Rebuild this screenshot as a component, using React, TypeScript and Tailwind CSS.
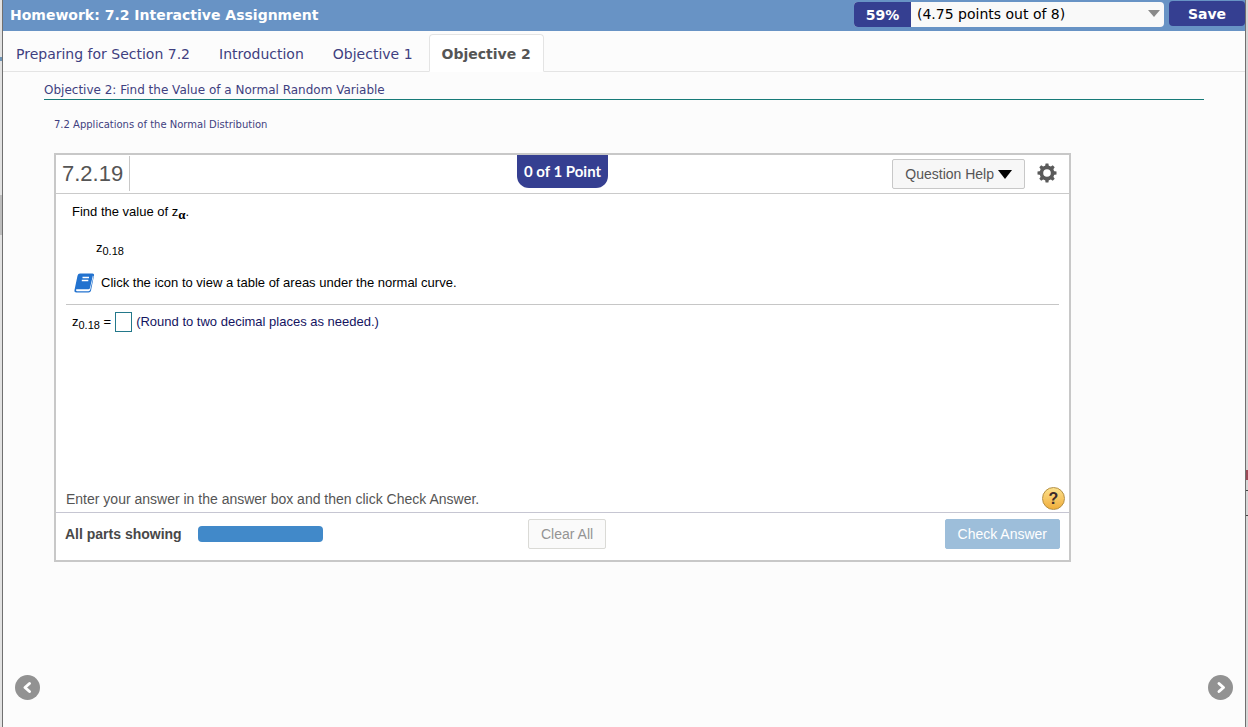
import { useState } from "react"

const tabs = [ "Preparing for Section 7.2", "Introduction", "Objective 1", "Objective 2" ]

const App = () => {

    const [ active, setActive ] = useState<string>("Objective 2")

    return (
        <div className="flex min-h-screen bg-[#fcfcfc] font-['DejaVu_Sans',sans-serif]">
            <div className="flex w-[3px] shrink-0 flex-col border-r border-[#707070] bg-[#e2e2e2]">
                <div className="mt-[57px] h-1 bg-[#6d93b5]"></div>
                <div className="mt-[134px] h-10 bg-[#bdbdbd]"></div>
            </div>
            <div className="flex min-w-0 grow flex-col">
                <Header />
                <nav className="flex h-[41px] items-end border-b border-[#e4e4e4]">
                    {
                        tabs.map(t => {
                            return (
                                <button
                                    key={t}
                                    onClick={() => setActive(t)}
                                    className={`-mb-px h-[38px] cursor-pointer rounded-t border px-3 pt-px text-sm ${t === active ? "border-[#e4e4e4] border-b-white bg-white font-bold text-[#555555]" : "mr-[3px] border-transparent text-[#3f3f80]"}`}
                                >
                                    {t}
                                </button>
                            )
                        })
                    }
                </nav>
                <main className="px-[41px] pt-[10px]">
                    <h2 className="border-b border-[#177a78] text-xs leading-[17px] text-[#3f3f80]">Objective 2: Find the Value of a Normal Random Variable</h2>
                    <div className="pl-[10px]">
                        <h3 className="pt-4 text-[10px] leading-[18px] text-[#3f3f80]">7.2 Applications of the Normal Distribution</h3>
                        <Question />
                    </div>
                </main>
                <div className="mt-auto flex justify-between px-3 pt-6 pb-[27px]">
                    <PageButton label="Previous" path="M14.5 8.5 L10 12.5 L14.5 16.5" />
                    <PageButton label="Next" path="M11 8.5 L15.5 12.5 L11 16.5" />
                </div>
            </div>
            <div className="flex w-[3px] shrink-0 flex-col border-l border-[#707070] bg-[#d6d6d6]">
                <div className="mt-[470px] h-[10px] bg-[#9c4b58]"></div>
                <div className="mt-[10px] h-px bg-[#444444]"></div>
                <div className="mt-6 h-px bg-[#444444]"></div>
            </div>
        </div>
    )
}

const Header = () => {
    return (
        <header className="flex h-[31px] items-start justify-between bg-[#6893c5]">
            <h1 className="pl-[7px] text-sm leading-[30px] font-bold text-white">Homework: 7.2 Interactive Assignment</h1>
            <div className="flex gap-[5px] pt-px">
                <div className="mt-px flex h-[25px] w-[310px] overflow-hidden rounded bg-[#f9f9f9]">
                    <label htmlFor="score" className="w-[57px] bg-[#353f91] text-center text-sm leading-[26px] font-bold text-white">59%</label>
                    <div className="relative grow">
                        <select id="score" className="block h-6 w-full appearance-none pl-[6px] text-sm leading-6 text-black">
                            <option>(4.75 points out of 8)</option>
                        </select>
                        <svg className="pointer-events-none absolute top-2 right-1" width="12" height="7" viewBox="0 0 12 7" fill="#8a8a8a"><path d="M0 0 H12 L6 7 Z" /></svg>
                    </div>
                </div>
                <button className="h-[25px] w-[76px] cursor-pointer rounded bg-[#353f91] text-sm font-bold text-white">Save</button>
            </div>
        </header>
    )
}

const Question = () => {
    return (
        <section className="mt-[19px] w-full max-w-[1017px] border-2 border-[#c8c8c8] bg-white font-['Liberation_Sans',sans-serif]">
            <div className="grid h-[39px] grid-cols-[1fr_auto_1fr] items-start border-b border-[#cacaca]">
                <div className="flex h-9">
                    <span className="mt-px border-r border-[#c8c8c8] px-[6px] text-[22px] leading-[36px] text-[#555555]">7.2.19</span>
                </div>
                <div className="h-[33px] rounded-b-xl bg-[#353f91] px-[7px] font-['Lato',sans-serif] text-[15px] leading-[32px] font-bold text-white">0 of 1 Point</div>
                <div className="flex items-center justify-end gap-3 pt-1 pr-3">
                    <button className="flex h-[30px] cursor-pointer items-center gap-1 rounded-xs border border-[#c8c8c8] bg-[#f7f7f7] px-3 text-sm text-[#555555]">
                        Question Help
                        <svg width="14" height="9" viewBox="0 0 14 9" fill="#000000"><path d="M0 0 H14 L7 9 Z" /></svg>
                    </button>
                    <button aria-label="Settings" className="cursor-pointer pb-[2px]">
                        <GearIcon />
                    </button>
                </div>
            </div>
            <div className="flex min-h-[319px] flex-col border-b border-[#c6c6d2] text-[13px] text-black">
                <p className="pt-2 pl-4 leading-5">Find the value of z<Sub><b className="font-['Liberation_Serif',serif] text-[13px]">α</b></Sub>.</p>
                <p className="pt-4 pl-10 leading-5">z<Sub>0.18</Sub></p>
                <div className="flex items-center gap-[6px] pt-[15px] pl-[18px] leading-5">
                    <BookIcon />
                    <span>Click the icon to view a table of areas under the normal curve.</span>
                </div>
                <div className="mx-[10px] mt-[11px] border-t border-[#c6c6c6]"></div>
                <div className="flex items-center gap-1 pt-[7px] pl-4">
                    <label htmlFor="answer" className="leading-5">z<Sub>0.18</Sub> =</label>
                    <input id="answer" type="text" className="h-5 w-[17px] border border-[#23788a] bg-white text-center outline-none" />
                    <span className="text-[#14145f]">(Round to two decimal places as needed.)</span>
                </div>
                <div className="mt-auto flex items-center justify-between pr-1 pb-[2px] pl-[10px]">
                    <p className="text-sm text-[#555555]">Enter your answer in the answer box and then click Check Answer.</p>
                    <button aria-label="Help" className="size-[23px] cursor-pointer rounded-full border border-[#b58f42] bg-linear-to-b from-[#fbe08a] to-[#f0ae38] text-base leading-[21px] font-bold text-[#3a2a2a]">?</button>
                </div>
            </div>
            <div className="grid h-[47px] grid-cols-[463px_1fr_auto] items-start pt-[6px] pr-[9px] pl-[9px] text-sm">
                <div className="flex h-[30px] items-center gap-4">
                    <span className="font-bold text-[#484848]">All parts showing</span>
                    <div className="h-4 w-[125px] rounded-sm bg-[#4189c9]"></div>
                </div>
                <button className="h-[30px] cursor-pointer justify-self-start rounded-xs border border-[#dadad6] bg-[#fafafa] px-3 text-[#949494]">Clear All</button>
                <button className="h-[30px] cursor-pointer rounded-xs border border-[#9dbeda] bg-[#9dbeda] px-3 text-white">Check Answer</button>
            </div>
        </section>
    )
}

const Sub = ({ children }: { children: React.ReactNode }) => {
    return (
        <span className="relative top-[3px] text-[11px]">{children}</span>
    )
}

const PageButton = ({ label, path }: { label: string, path: string }) => {
    return (
        <button aria-label={label} className="cursor-pointer">
            <svg width="25" height="25" viewBox="0 0 25 25" fill="none">
                <circle cx="12.5" cy="12.5" r="12.5" fill="#929292" />
                <path d={path} stroke="#ffffff" strokeWidth="3" strokeLinecap="round" strokeLinejoin="round" />
            </svg>
        </button>
    )
}

const GearIcon = () => {
    return (
        <svg className="block" width="20" height="20" viewBox="0 0 20 20" fill="none">
            <circle cx="10" cy="10" r="5.6" stroke="#5a5a5a" strokeWidth="3.6" />
            <g fill="#5a5a5a">
                {
                    [ 0, 45, 90, 135, 180, 225, 270, 315 ].map(a => {
                        return (
                            <path key={a} d="M8.6 0.5 H11.4 L12 4 H8 Z" transform={`rotate(${a} 10 10)`} />
                        )
                    })
                }
            </g>
        </svg>
    )
}

const BookIcon = () => {
    return (
        <svg className="block" width="21" height="20" viewBox="0 0 21 20" fill="none">
            <path d="M6 0.5 H18.5 Q20.5 0.5 20 2.5 L17 17.5 Q16.6 19.5 14.5 19.5 H2.5 Q0 19.5 0.5 17 L3.5 2.8 Q4 0.5 6 0.5 Z" fill="#2272cf" />
            <path d="M18.9 2.6 L16 15 Q15.6 16.2 14.5 16.2 H2.2 Q1.6 18.2 3 18.2 H14.5 Q15.8 18.2 16.3 16.5 L19.4 3.4 Z" fill="#ffffff" />
            <path d="M8.5 4.5 H15 M7.8 7.5 H14.3" stroke="#ffffff" strokeWidth="1.3" />
        </svg>
    )
}

export default App
